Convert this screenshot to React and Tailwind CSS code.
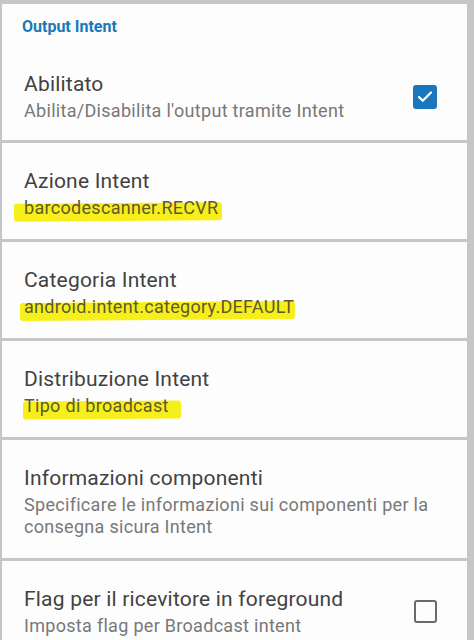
import { Check } from 'lucide-react';

const rows = [
  { title: 'Azione Intent', sub: 'barcodescanner.RECVR', mark: { l: -10, r: -3 } },
  { title: 'Categoria Intent', sub: 'android.intent.category.DEFAULT', mark: { l: -4, r: -1 } },
  { title: 'Distribuzione Intent', sub: 'Tipo di broadcast', mark: { l: -1, r: -12 } },
  { title: 'Informazioni componenti', sub: 'Specificare le informazioni sui componenti per la consegna sicura Intent' },
];

// highlighter stroke drawn over the screenshot
function Marked({ children, mark }) {
  if (!mark) return children;
  return (
    <span className="relative inline-block">
      <span className="absolute top-[6px] bottom-[-2px] bg-[#f7ef1c] rounded-[3px] -rotate-[0.4deg]"
        style={{ left: mark.l, right: mark.r }} />
      <span className="relative text-[#5f5a2a]">{children}</span>
    </span>
  );
}

function Box({ checked }) {
  return checked ? (
    <div className="w-6 h-6 rounded-[3px] bg-[#1877bd] flex items-center justify-center shrink-0">
      <Check size={18} strokeWidth={3} className="text-white" />
    </div>
  ) : (
    <div className="w-[23px] h-[23px] rounded-[3px] border-2 border-[#6a6a6a] shrink-0" />
  );
}

function Row({ title, sub, mark, checkbox }) {
  return (
    <div className={`bg-[#fdfdfd] flex items-center pl-[22px] pt-[25px] pb-[20px] ${checkbox === undefined ? 'pr-[14px]' : 'pr-[30px]'}`}>
      <div className="flex-1 min-w-0">
        <div className="text-[21px] leading-[26px] tracking-[0.2px] text-[#424242]">{title}</div>
        <div className="mt-[3px] text-[18px] leading-[22px] tracking-[0.3px] text-[#787878]">
          <Marked mark={mark}>{sub}</Marked>
        </div>
      </div>
      {checkbox !== undefined && <Box checked={checkbox} />}
    </div>
  );
}

export default function App() {
  return (
    <div className="w-[474px] h-[640px] overflow-hidden bg-[#c6c6c6] pt-1 pl-[2px] pr-[7px]"
      style={{ fontFamily: 'Roboto, "Noto Sans", sans-serif' }}>
      <div className="flex flex-col gap-[3px]">
        <div className="bg-[#fdfdfd] flex flex-col">
          <div className="pl-[20px] pt-[12px] text-[16px] leading-[21px] font-bold text-[#1a78b6]">Output Intent</div>
          <div className="flex items-center pl-[22px] pr-[30px] pt-[34px] pb-[18px]">
            <div className="flex-1">
              <div className="text-[21px] leading-[26px] tracking-[0.2px] text-[#424242]">Abilitato</div>
              <div className="mt-[3px] text-[18px] leading-[22px] tracking-[0.3px] text-[#787878]">Abilita/Disabilita l'output tramite Intent</div>
            </div>
            <Box checked />
          </div>
        </div>
        {rows.map(r => <Row key={r.title} {...r} />)}
        <Row title="Flag per il ricevitore in foreground" sub="Imposta flag per Broadcast intent" checkbox={false} />
      </div>
    </div>
  );
}
